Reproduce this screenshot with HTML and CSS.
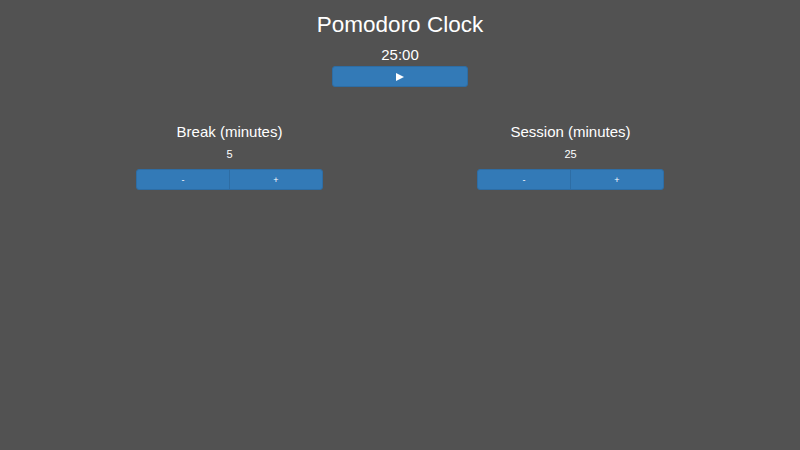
FILE: index.html
```html
<!DOCTYPE html>
<html>
<head>
<meta charset="utf-8">
<link rel="stylesheet" href="styles.css">
</head>
<body>
<div class="app">
  <h1 class="title">Pomodoro Clock</h1>
  <div class="time">25:00</div>
  <button class="btn play"><svg width="8" height="8" viewBox="0 0 8 8"><polygon points="0,0 8,4 0,8" fill="#fff"/></svg></button>
  <div class="settings">
    <div class="setting">
      <h2 class="label">Break (minutes)</h2>
      <div class="value">5</div>
      <div class="group"><button class="btn small">-</button><button class="btn small">+</button></div>
    </div>
    <div class="setting">
      <h2 class="label">Session (minutes)</h2>
      <div class="value">25</div>
      <div class="group"><button class="btn small">-</button><button class="btn small">+</button></div>
    </div>
  </div>
</div>
</body>
</html>
```
FILE: styles.css
```css
html, body {
  margin: 0;
  padding: 0;
  background: #525252;
  height: 100%;
}
body {
  font-family: "Liberation Sans", Arial, sans-serif;
  color: #fff;
}
.app {
  display: flex;
  flex-direction: column;
  align-items: center;
}
.title {
  font-size: 22.5px;
  font-weight: normal;
  margin: 12px 0 0;
  line-height: 26px;
}
.time {
  font-size: 15px;
  line-height: 18px;
  margin-top: 8px;
}
.btn {
  background: #337ab7;
  border: 1px solid #2e6da4;
  border-radius: 3px;
  color: #fff;
  font-family: inherit;
  padding: 0;
  cursor: pointer;
}
.play {
  width: 136px;
  height: 21px;
  margin-top: 2px;
  display: flex;
  align-items: center;
  justify-content: center;
}
.settings {
  display: grid;
  grid-template-columns: 341px 341px;
  margin-top: 36px;
}
.setting {
  display: flex;
  flex-direction: column;
  align-items: center;
}
.label {
  font-size: 15px;
  font-weight: normal;
  line-height: 18px;
  margin: 0;
}
.value {
  font-size: 11px;
  line-height: 13px;
  margin-top: 7px;
}
.group {
  display: flex;
  margin-top: 8px;
}
.small {
  width: 94px;
  height: 21px;
  font-size: 9px;
}
.group .small:first-child {
  border-top-right-radius: 0;
  border-bottom-right-radius: 0;
}
.group .small:last-child {
  border-top-left-radius: 0;
  border-bottom-left-radius: 0;
  margin-left: -1px;
}
```
